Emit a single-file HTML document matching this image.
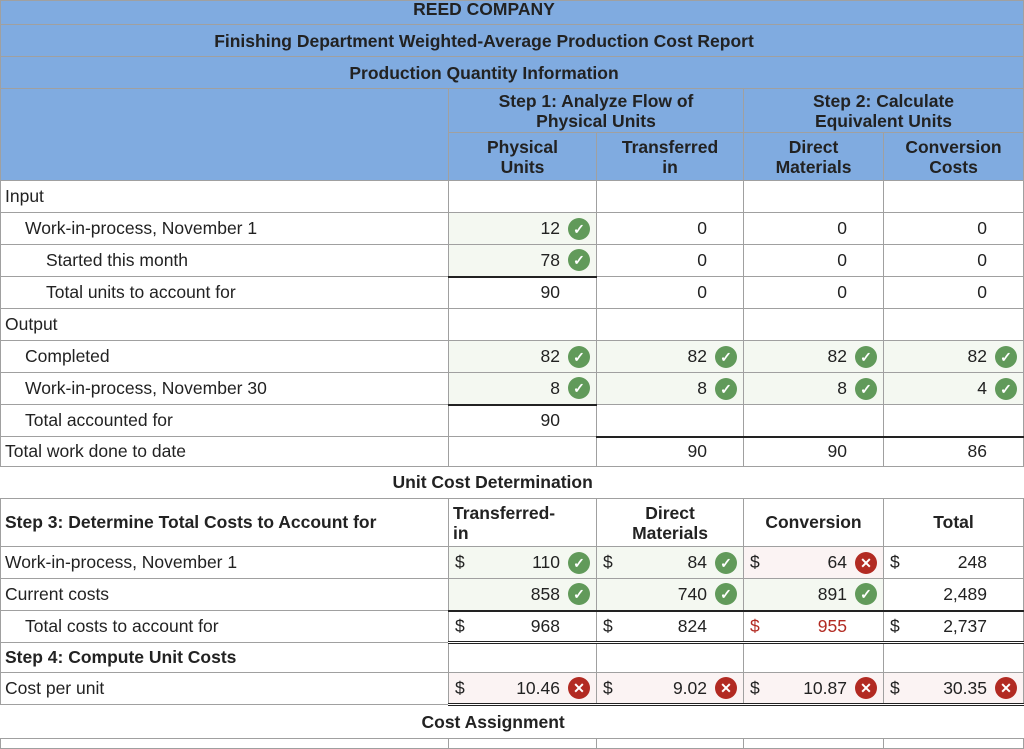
<!DOCTYPE html>
<html><head><style>
body{margin:0;background:#fff;font-family:"Liberation Sans",sans-serif;font-size:17.5px;color:#222}
table{border-collapse:collapse;table-layout:fixed;width:1023px}
td{border:1px solid #a0a0a0;padding:0 4px;position:relative;white-space:nowrap;overflow:hidden}
.b{background:#80abe0;font-weight:bold;text-align:center;line-height:20px}
.n{text-align:right;padding-right:36px}
.g{background:#f4f8f1}.r{background:#fbf3f3}
.ic{position:absolute;right:6px;top:50%;margin-top:-11px;width:22px;height:22px;border-radius:50%;color:#fff;font-size:14px;line-height:22px;text-align:center;font-weight:bold}
.ok{background:#619a5a}.x{background:#b22a22}
.d{position:absolute;left:6px}
.tk{border-top:2px solid #222}
.db{border-bottom:3px double #222}
.red{color:#b22a22}
.h{font-weight:bold}
</style></head><body>
<table>
<colgroup><col style="width:448px"><col style="width:148px"><col style="width:147px"><col style="width:140px"><col style="width:140px"></colgroup>
<tr style="height:24px"><td colspan="5" class="b" style="padding-right:60px;vertical-align:top;line-height:16px">REED COMPANY</td></tr>
<tr style="height:32px"><td colspan="5" class="b" style="padding-right:60px">Finishing Department Weighted-Average Production Cost Report</td></tr>
<tr style="height:32px"><td colspan="5" class="b" style="padding-right:60px">Production Quantity Information</td></tr>
<tr style="height:44px"><td rowspan="2" class="b"></td><td colspan="2" class="b">Step 1: Analyze Flow of<br>Physical Units</td><td colspan="2" class="b">Step 2: Calculate<br>Equivalent Units</td></tr>
<tr style="height:48px"><td class="b">Physical<br>Units</td><td class="b">Transferred<br>in</td><td class="b">Direct<br>Materials</td><td class="b">Conversion<br>Costs</td></tr>
<tr style="height:32px"><td>Input</td><td></td><td></td><td></td><td></td></tr>
<tr style="height:32px"><td style="padding-left:24px">Work-in-process, November 1</td><td class="n g">12<span class="ic ok">✓</span></td><td class="n">0</td><td class="n">0</td><td class="n">0</td></tr>
<tr style="height:32px"><td style="padding-left:45px">Started this month</td><td class="n g">78<span class="ic ok">✓</span></td><td class="n">0</td><td class="n">0</td><td class="n">0</td></tr>
<tr style="height:32px"><td style="padding-left:45px">Total units to account for</td><td class="n tk">90</td><td class="n">0</td><td class="n">0</td><td class="n">0</td></tr>
<tr style="height:32px"><td>Output</td><td></td><td></td><td></td><td></td></tr>
<tr style="height:32px"><td style="padding-left:24px">Completed</td><td class="n g">82<span class="ic ok">✓</span></td><td class="n g">82<span class="ic ok">✓</span></td><td class="n g">82<span class="ic ok">✓</span></td><td class="n g">82<span class="ic ok">✓</span></td></tr>
<tr style="height:32px"><td style="padding-left:24px">Work-in-process, November 30</td><td class="n g">8<span class="ic ok">✓</span></td><td class="n g">8<span class="ic ok">✓</span></td><td class="n g">8<span class="ic ok">✓</span></td><td class="n g">4<span class="ic ok">✓</span></td></tr>
<tr style="height:32px"><td style="padding-left:24px">Total accounted for</td><td class="n tk">90</td><td></td><td></td><td></td></tr>
<tr style="height:30px"><td>Total work done to date</td><td></td><td class="n tk">90</td><td class="n tk">90</td><td class="n tk">86</td></tr>
<tr style="height:32px"><td colspan="5" class="h" style="padding-left:392px;border-left:none;border-right:none">Unit Cost Determination</td></tr>
<tr style="height:48px"><td class="h">Step 3: Determine Total Costs to Account for</td><td class="h" style="line-height:20px">Transferred-<br>in</td><td class="h" style="text-align:center;line-height:20px">Direct<br>Materials</td><td class="h" style="text-align:center">Conversion</td><td class="h" style="text-align:center">Total</td></tr>
<tr style="height:32px"><td>Work-in-process, November 1</td><td class="n g"><span class="d">$</span>110<span class="ic ok">✓</span></td><td class="n g"><span class="d">$</span>84<span class="ic ok">✓</span></td><td class="n r"><span class="d">$</span>64<span class="ic x">✕</span></td><td class="n"><span class="d">$</span>248</td></tr>
<tr style="height:32px"><td>Current costs</td><td class="n g">858<span class="ic ok">✓</span></td><td class="n g">740<span class="ic ok">✓</span></td><td class="n g">891<span class="ic ok">✓</span></td><td class="n">2,489</td></tr>
<tr style="height:32px"><td style="padding-left:24px">Total costs to account for</td><td class="n tk db"><span class="d">$</span>968</td><td class="n tk db"><span class="d">$</span>824</td><td class="n tk db red"><span class="d">$</span>955</td><td class="n tk db"><span class="d">$</span>2,737</td></tr>
<tr style="height:30px"><td class="h">Step 4: Compute Unit Costs</td><td></td><td></td><td></td><td></td></tr>
<tr style="height:32px"><td>Cost per unit</td><td class="n r db"><span class="d">$</span>10.46<span class="ic x">✕</span></td><td class="n r db"><span class="d">$</span>9.02<span class="ic x">✕</span></td><td class="n r db"><span class="d">$</span>10.87<span class="ic x">✕</span></td><td class="n r db"><span class="d">$</span>30.35<span class="ic x">✕</span></td></tr>
<tr style="height:34px"><td colspan="5" class="h" style="padding-left:421px;border-left:none;border-right:none">Cost Assignment</td></tr>
<tr style="height:10px"><td></td><td></td><td></td><td></td><td></td></tr>
</table>
</body></html>
